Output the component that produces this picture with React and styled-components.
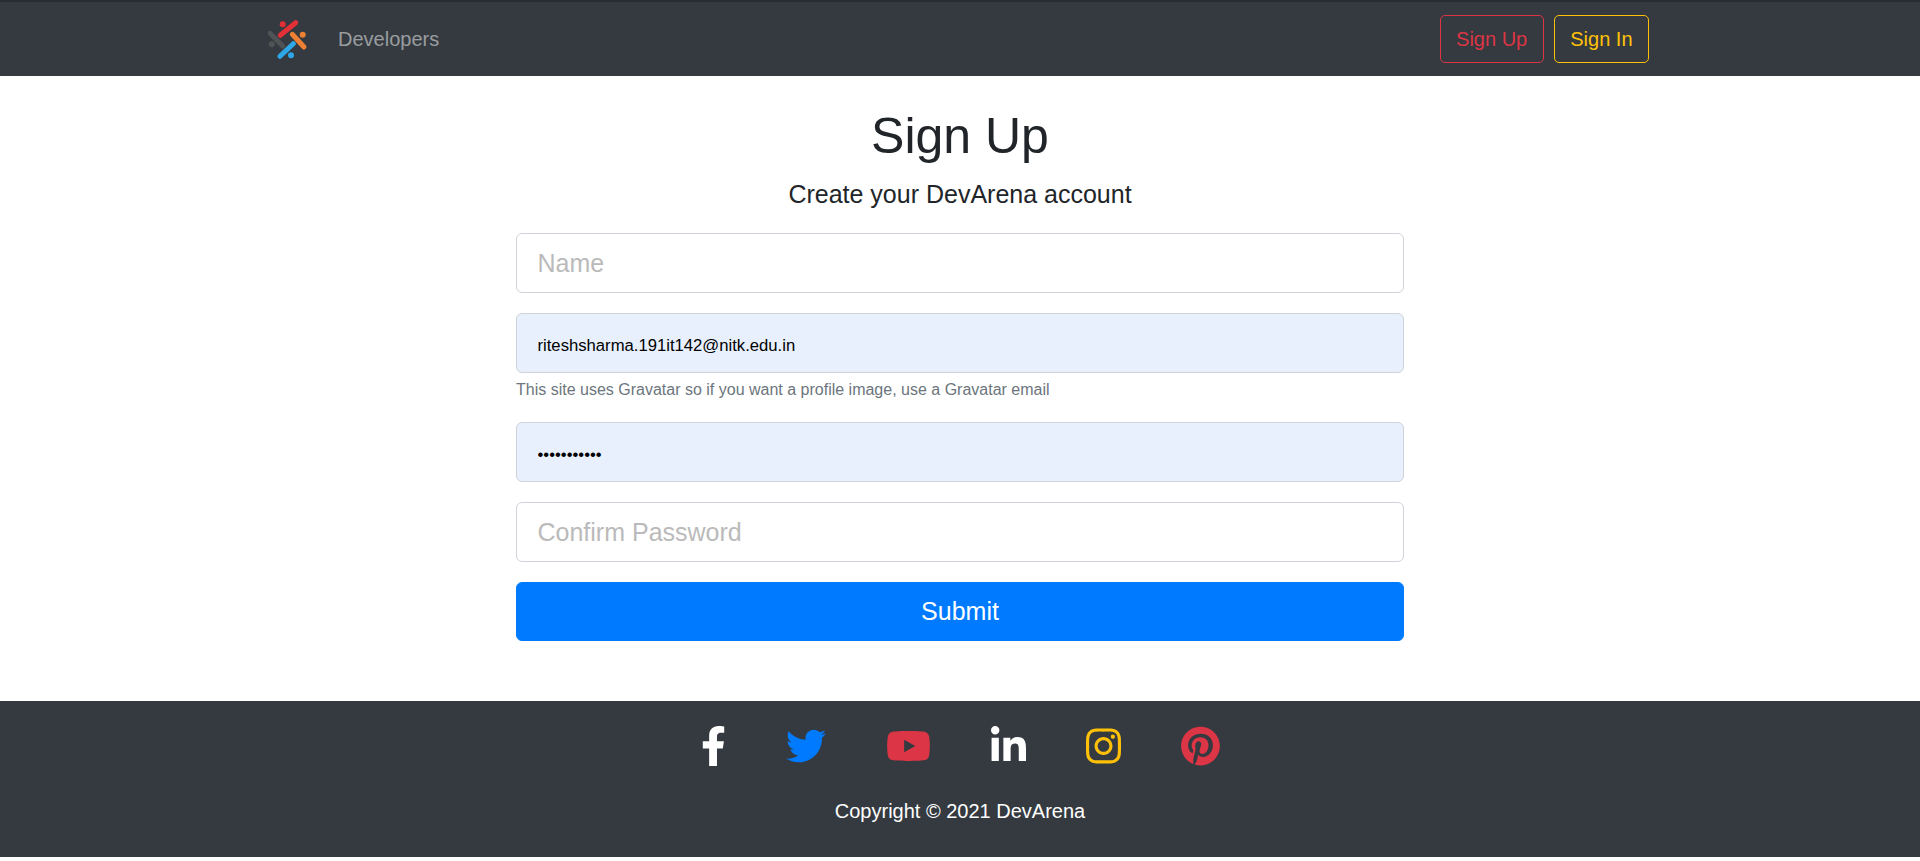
import React from 'react';
import styled, { createGlobalStyle } from 'styled-components';
import { FaFacebookF, FaTwitter, FaYoutube, FaLinkedinIn, FaInstagram, FaPinterest } from 'react-icons/fa';

const Global = createGlobalStyle`
  html, body { margin: 0; padding: 0; background: #fff; }
  body { font-family: "Liberation Sans", Arial, sans-serif; color: #212529; }
  * { box-sizing: border-box; }
`;

const Page = styled.div`
  display: flex;
  flex-direction: column;
  min-height: 861px;
`;

const Navbar = styled.nav`
  height: 76px;
  background: #343a40;
  border-top: 2px solid #292d32;
  display: flex;
  align-items: center;
  justify-content: space-between;
  padding: 0 271px 0 268px;
`;

const Brand = styled.div`
  display: flex;
  align-items: center;
  gap: 30px;
`;

const NavLink = styled.a`
  font-size: 20px;
  color: rgba(255, 255, 255, 0.5);
`;

const NavActions = styled.div`
  display: flex;
  gap: 10px;
`;

const OutlineButton = styled.button`
  height: 48px;
  padding: 0 15.5px;
  font: 20px "Liberation Sans", Arial, sans-serif;
  background: transparent;
  border: 1px solid ${p => p.$color};
  border-radius: 5px;
  color: ${p => p.$color};
`;

const Main = styled.main`
  width: 888px;
  margin: 0 auto;
  height: 625px;
  padding-top: 30px;
`;

const Title = styled.h1`
  margin: 0;
  font-size: 50px;
  font-weight: 400;
  line-height: 60px;
  text-align: center;
`;

const Lead = styled.p`
  margin: 9px 0 0;
  font-size: 25px;
  line-height: 38px;
  text-align: center;
`;

const Form = styled.form`
  margin-top: 20px;
  display: flex;
  flex-direction: column;
`;

const Field = styled.div`
  margin-bottom: 20px;
`;

const Input = styled.input`
  display: block;
  width: 100%;
  height: 60px;
  padding: ${p => (p.$filled ? '5px' : '0')} 20.5px 0;
  font: ${p => (p.$filled ? '16.67px' : '25px')} "Liberation Sans", Arial, sans-serif;
  color: #000;
  background: ${p => (p.$filled ? '#e8f0fe' : '#fff')};
  border: 1px solid #ced4da;
  border-radius: 6px;
  &::placeholder { color: #bababa; opacity: 1; }
`;

const Hint = styled.small`
  display: block;
  margin-top: 5px;
  font-size: 16px;
  line-height: 24px;
  color: #6c757d;
`;

const Submit = styled.button`
  height: 59px;
  border: 1px solid #007bff;
  border-radius: 6px;
  background: #007bff;
  color: #fff;
  font: 25px "Liberation Sans", Arial, sans-serif;
`;

const Footer = styled.footer`
  height: 156px;
  background: #343a40;
  padding-top: 25px;
  text-align: center;
`;

const Socials = styled.div`
  display: flex;
  justify-content: center;
  align-items: center;
  gap: 60px;
  height: 40px;
`;

const Social = styled.span`
  display: flex;
  color: ${p => p.$color};
  svg { height: 40px; width: ${p => p.$width}px; }
`;

const Copyright = styled.p`
  margin: 30px 0 0;
  font-size: 20px;
  line-height: 30px;
  color: #fff;
`;

const Logo = () => (
  <svg width="40" height="40" viewBox="268 19 40 40" fill="none" strokeWidth="5" strokeLinecap="round">
    <path d="M280.3 35.3L295.7 22.7" stroke="#e32f36" />
    <circle cx="282.7" cy="24.3" r="3" fill="#e32f36" />
    <path d="M292.3 34.3L304 47" stroke="#ee8033" />
    <circle cx="302.7" cy="34.7" r="3" fill="#ee8033" />
    <path d="M280 56.3L293.3 43.7" stroke="#2ea7e8" />
    <circle cx="291" cy="55.3" r="3" fill="#2ea7e8" />
    <path d="M270 33.3L282.7 46" stroke="#505356" />
    <circle cx="271.7" cy="44.3" r="3" fill="#505356" />
  </svg>
);

export default function App() {
  return (
    <Page>
      <Global />
      <Navbar>
        <Brand>
          <Logo />
          <NavLink>Developers</NavLink>
        </Brand>
        <NavActions>
          <OutlineButton $color="#dc3545">Sign Up</OutlineButton>
          <OutlineButton $color="#ffc107">Sign In</OutlineButton>
        </NavActions>
      </Navbar>
      <Main>
        <Title>Sign Up</Title>
        <Lead>Create your DevArena account</Lead>
        <Form onSubmit={e => e.preventDefault()}>
          <Field><Input placeholder="Name" /></Field>
          <Field>
            <Input $filled defaultValue="riteshsharma.191it142@nitk.edu.in" />
            <Hint>This site uses Gravatar so if you want a profile image, use a Gravatar email</Hint>
          </Field>
          <Field><Input $filled type="password" defaultValue="12345678901" /></Field>
          <Field><Input type="password" placeholder="Confirm Password" /></Field>
          <Submit>Submit</Submit>
        </Form>
      </Main>
      <Footer>
        <Socials>
          <Social $color="#fff" $width={25}><FaFacebookF /></Social>
          <Social $color="#007bff" $width={40}><FaTwitter /></Social>
          <Social $color="#dc3545" $width={45}><FaYoutube /></Social>
          <Social $color="#fff" $width={35}><FaLinkedinIn /></Social>
          <Social $color="#ffc107" $width={35}><FaInstagram /></Social>
          <Social $color="#dc3545" $width={39}><FaPinterest /></Social>
        </Socials>
        <Copyright>Copyright © 2021 DevArena</Copyright>
      </Footer>
    </Page>
  );
}
